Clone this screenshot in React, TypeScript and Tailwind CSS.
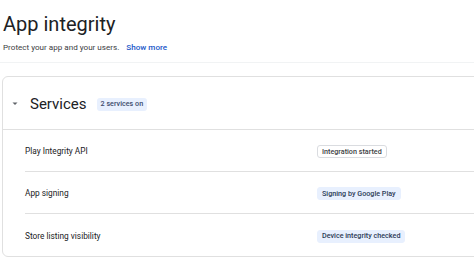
import React from 'react';

type Row = {
  name: string;
  status: string;
  tone: 'outline' | 'blue';
};

const rows: Row[] = [
  { name: 'Play Integrity API', status: 'Integration started', tone: 'outline' },
  { name: 'App signing', status: 'Signing by Google Play', tone: 'blue' },
  { name: 'Store listing visibility', status: 'Device integrity checked', tone: 'blue' },
];

function Chip({ label, tone }: { label: string; tone: Row['tone'] }) {
  const cls =
    tone === 'outline'
      ? 'border border-[#dadce0] bg-white text-[#3c4043]'
      : 'border border-[#e8f0fe] bg-[#e8f0fe] text-[#2b3a55]';
  return (
    <span className={`inline-flex items-center rounded-[3px] px-[4px] h-[13px] text-[7.2px] font-medium leading-none ${cls}`}>
      {label}
    </span>
  );
}

export default function App() {
  return (
    <div className="w-[474px] h-[272px] overflow-hidden bg-white font-['Roboto',sans-serif] text-[#202124]">
      {/* En-tête */}
      <div className="pl-[3px] pt-[10px]">
        <h1 className="text-[20px] leading-[28px] font-normal">App integrity</h1>
        <p className="mt-[3px] text-[8.1px] leading-[12px] text-[#3c4043]">
          Protect your app and your users.
          <span className="ml-[7px] text-[#1a57c9] font-medium">Show more</span>
        </p>
      </div>
      <div className="mt-[9px] h-px bg-[#f1f3f4]" />

      {/* Carte services */}
      <div className="mt-[13px] ml-[2px] mr-[-10px] rounded-[6px] border border-[#e0e0e0]">
        <div className="flex items-center h-[53px] pt-[2px] border-b border-[#e0e0e0]">
          <svg width="8" height="8" viewBox="0 0 8 8" className="ml-[8px]">
            <path d="M1.5 2.5 L6.5 2.5 L4 5 Z" fill="#5f6368" />
          </svg>
          <span className="ml-[11px] text-[15px] leading-none text-[#202124]">Services</span>
          <span className="ml-[10px] inline-flex items-center rounded-[3px] bg-[#e8f0fe] px-[4px] h-[13px] text-[7.2px] font-medium text-[#3c4a6b]">
            2 services on
          </span>
        </div>
        {rows.map((r, i) => (
          <div key={r.name} className={`ml-[22px] flex items-center h-[42px] pt-[2px] ${i < rows.length - 1 ? 'border-b border-[#e0e0e0]' : ''}`}>
            <span className="w-[292px] text-[8.3px] text-[#202124]">{r.name}</span>
            <Chip label={r.status} tone={r.tone} />
          </div>
        ))}
      </div>
    </div>
  );
}
